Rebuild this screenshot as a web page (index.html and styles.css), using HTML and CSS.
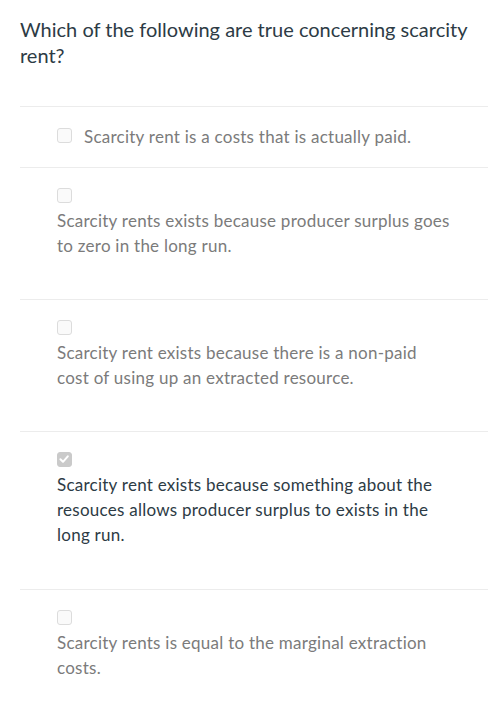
FILE: index.html
```html
<!DOCTYPE html>
<html>
<head>
<meta charset="utf-8">
<link rel="stylesheet" href="styles.css">
</head>
<body>
<div class="quiz">
  <div class="question">Which of the following are true concerning scarcity rent?</div>
  <div class="answers">
    <div class="answer answer--inline">
      <span class="box"></span>
      <span class="label">Scarcity rent is a costs that is actually paid.</span>
    </div>
    <div class="answer">
      <span class="box"></span>
      <span class="label">Scarcity rents exists because producer surplus goes to zero in the long run.</span>
    </div>
    <div class="answer">
      <span class="box"></span>
      <span class="label">Scarcity rent exists because there is a non-paid cost of using up an extracted resource.</span>
    </div>
    <div class="answer answer--selected">
      <span class="box box--checked"><svg viewBox="0 0 14 14" width="14" height="14"><path d="M3.4 7.3 L6 9.8 L10.8 4.3" fill="none" stroke="#fff" stroke-width="2" stroke-linecap="round" stroke-linejoin="round"/></svg></span>
      <span class="label">Scarcity rent exists because something about the resouces allows producer surplus to exists in the long run.</span>
    </div>
    <div class="answer">
      <span class="box"></span>
      <span class="label">Scarcity rents is equal to the marginal extraction costs.</span>
    </div>
  </div>
</div>
</body>
</html>
```
FILE: styles.css
```css
html, body {
  margin: 0;
  padding: 0;
  background: #ffffff;
}
.quiz {
  font-family: Lato, "Liberation Sans", sans-serif;
  width: 468px;
  padding-left: 20px;
}
.question {
  font-size: 20px;
  line-height: 26px;
  color: #2d3b45;
  padding-top: 16px;
  padding-bottom: 38px;
}
.answer {
  border-top: 1px solid #ececec;
  padding: 20px 0 41.2px 37px;
  display: flex;
  flex-direction: column;
  align-items: flex-start;
}
.answer--inline {
  flex-direction: row;
  padding-top: 17px;
  padding-bottom: 18px;
}
.answer--inline .box {
  margin-top: 4px;
  margin-right: 12px;
}
.answer--inline .label {
  margin-top: 0;
}
.box {
  box-sizing: border-box;
  width: 15px;
  height: 15px;
  border: 1px solid #dcdcdc;
  border-radius: 3px;
  background: #fafafa;
  flex: none;
  display: block;
}
.box--checked {
  background: #cacaca;
  border-color: #cacaca;
  position: relative;
}
.box--checked svg {
  position: absolute;
  left: -1px;
  top: -1px;
}
.label {
  display: block;
  font-size: 17px;
  letter-spacing: 0.25px;
  line-height: 25px;
  color: #7b7b7b;
  margin-top: 5px;
  max-width: 394px;
}
.answer--selected .label {
  color: #2d3b45;
}
```
